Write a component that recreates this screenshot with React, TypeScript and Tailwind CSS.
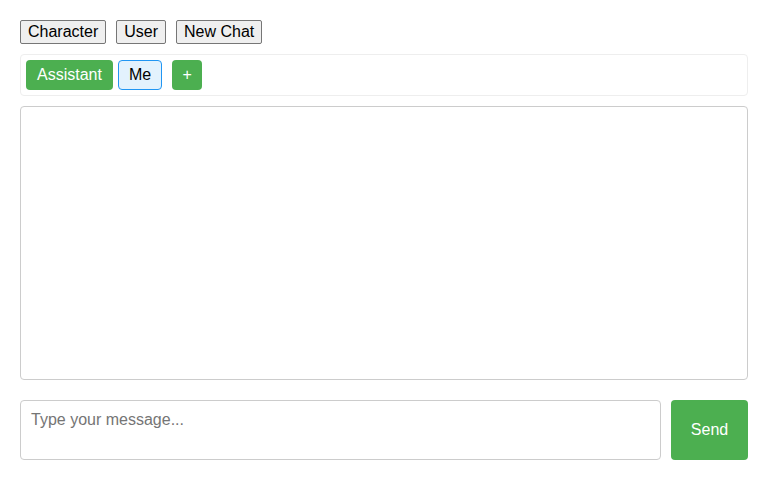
import React, { useState } from 'react';

const font = { fontFamily: '"Liberation Sans", Arial, sans-serif' };

export default function App() {
  const [msg, setMsg] = useState('');

  return (
    <div className="p-5 bg-white min-h-[480px] text-black" style={font}>
      <div className="flex gap-[10px] h-6">
        {['Character', 'User', 'New Chat'].map((label) => (
          <button
            key={label}
            className="bg-[#efefef] border border-[#767676] rounded-[2px] px-[7px] text-base leading-[22px] text-black"
          >
            {label}
          </button>
        ))}
      </div>

      <div className="mt-[10px] h-[42px] border border-[#eeeeee] rounded-[4px] flex items-center px-[5px]">
        <button className="h-[30px] px-[11px] rounded-[4px] bg-[#4caf50] text-white text-base">
          Assistant
        </button>
        <button className="ml-[5px] h-[30px] px-[10px] rounded-[4px] bg-[#e3f2fd] border border-[#2196f3] text-black text-base">
          Me
        </button>
        <button className="ml-[10px] h-[30px] w-[30px] rounded-[4px] bg-[#4caf50] text-white text-base">
          +
        </button>
      </div>

      <div className="mt-[10px] h-[274px] border border-[#cccccc] rounded-[4px]" />

      <div className="mt-5 flex gap-[10px]">
        <textarea
          value={msg}
          onChange={(e) => setMsg(e.target.value)}
          placeholder="Type your message..."
          className="flex-1 h-[60px] border border-[#cccccc] rounded-[4px] px-[10px] py-[9px] text-base leading-[20px] resize-none outline-none placeholder:text-[#757575]"
          style={font}
        />
        <button className="w-[77px] h-[60px] rounded-[4px] bg-[#4caf50] text-white text-base">
          Send
        </button>
      </div>
    </div>
  );
}
